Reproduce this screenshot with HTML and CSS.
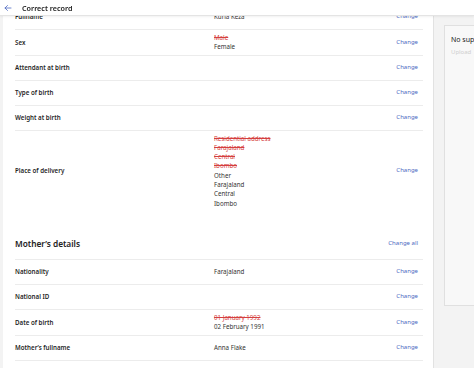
FILE: index.html
```html
<!DOCTYPE html>
<html lang="en">
<head>
  <meta charset="UTF-8">
  <meta name="viewport" content="width=device-width, initial-scale=1.0">
  <title>Correct record</title>
  <link rel="stylesheet" href="styles.css">
</head>
<body>
  <div class="topbar">
    <svg class="back" width="8" height="8" viewBox="0 0 16 16">
      <path d="M14 8H2M7 3L2 8l5 5" fill="none" stroke="#4c68c1" stroke-width="1.6" stroke-linecap="round" stroke-linejoin="round"/>
    </svg>
    <span class="title">Correct record</span>
  </div>
  <div class="page">
    <div class="card">
      <div class="section">
        <div class="row">
          <div class="label">Fullname</div>
          <div class="value">Kuria Keza</div>
          <div class="change">Change</div>
        </div>
        <div class="row">
          <div class="label">Sex</div>
          <div class="value"><div class="old">Male</div><div>Female</div></div>
          <div class="change">Change</div>
        </div>
        <div class="row">
          <div class="label">Attendant at birth</div>
          <div class="value"></div>
          <div class="change">Change</div>
        </div>
        <div class="row">
          <div class="label">Type of birth</div>
          <div class="value"></div>
          <div class="change">Change</div>
        </div>
        <div class="row">
          <div class="label">Weight at birth</div>
          <div class="value"></div>
          <div class="change">Change</div>
        </div>
        <div class="row row-last">
          <div class="label">Place of delivery</div>
          <div class="value">
            <div class="old">Residential address</div>
            <div class="old">Farajaland</div>
            <div class="old">Central</div>
            <div class="old">Ibombo</div>
            <div>Other</div>
            <div>Farajaland</div>
            <div>Central</div>
            <div>Ibombo</div>
          </div>
          <div class="change">Change</div>
        </div>
      </div>
      <div class="section">
        <div class="section-head">
          <h2>Mother’s details</h2>
          <div class="change">Change all</div>
        </div>
        <div class="row">
          <div class="label">Nationality</div>
          <div class="value">Farajaland</div>
          <div class="change">Change</div>
        </div>
        <div class="row">
          <div class="label">National ID</div>
          <div class="value"></div>
          <div class="change">Change</div>
        </div>
        <div class="row">
          <div class="label">Date of birth</div>
          <div class="value"><div class="old">01 January 1992</div><div>02 February 1991</div></div>
          <div class="change">Change</div>
        </div>
        <div class="row">
          <div class="label">Mother’s fullname</div>
          <div class="value">Anna Flake</div>
          <div class="change">Change</div>
        </div>
      </div>
    </div>
    <div class="aside">
      <div class="docs">
        <div class="docs-title">No supporting documents</div>
        <div class="docs-sub">Upload</div>
      </div>
    </div>
  </div>
</body>
</html>
```

FILE: styles.css
```css
* {
  margin: 0;
  padding: 0;
  box-sizing: border-box;
}
body {
  font-family: "Noto Sans", sans-serif;
  font-size: 6.2px;
  color: #1f1f1f;
  background: #f3f3f3;
  overflow: hidden;
}
.topbar {
  position: fixed;
  top: 0;
  left: 0;
  right: 0;
  height: 16px;
  background: #fff;
  border-bottom: 1px solid #e4e4e4;
  box-shadow: 0 1px 2px rgba(0, 0, 0, 0.06);
  display: flex;
  align-items: center;
  padding-left: 4px;
  z-index: 2;
}
.back {
  margin-right: 10px;
}
.title {
  font-size: 7.2px;
  font-weight: 600;
  color: #222;
}
.page {
  display: flex;
  height: 368px;
}
.card {
  flex: 0 0 431px;
  margin-left: 3px;
  background: #fff;
  border-right: 1px solid #e2e2e2;
  padding: 5px 10px 0 12px;
}
.section + .section {
  margin-top: 17px;
}
.row {
  display: flex;
  align-items: center;
  min-height: 25px;
  padding: 3px 0;
  border-bottom: 1px solid #ececec;
  line-height: 9.3px;
}
.row-last {
  border-bottom: none;
}
.label {
  width: 199px;
  font-weight: 600;
}
.value {
  flex: 1;
  color: #333;
}
.old {
  color: #d53f3f;
  text-decoration: line-through;
}
.change {
  color: #4c68c1;
  font-size: 6px;
  padding-right: 5px;
}
.section-head {
  display: flex;
  align-items: center;
  justify-content: space-between;
  height: 32px;
  border-bottom: 1px solid #ececec;
}
.section-head h2 {
  font-size: 8.3px;
  font-weight: 600;
  color: #222;
}
.aside {
  flex: 1;
  min-width: 0;
  padding: 25px 0 0 10px;
}
.docs {
  height: 281px;
  background: #f8f8f8;
  border: 1px solid #e0e0e0;
  border-right: none;
  padding: 9px 0 0 6px;
  white-space: nowrap;
  overflow: hidden;
}
.docs-title {
  font-size: 7px;
  color: #222;
}
.docs-sub {
  margin-top: 4px;
  font-size: 6px;
  color: #cfcfcf;
}
```
